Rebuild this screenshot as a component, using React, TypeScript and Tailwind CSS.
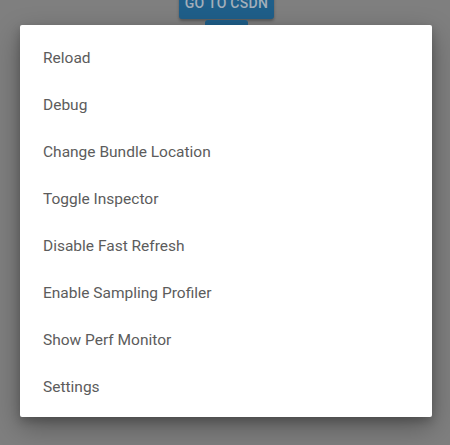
import React from "react";

const items = [
  "Reload",
  "Debug",
  "Change Bundle Location",
  "Toggle Inspector",
  "Disable Fast Refresh",
  "Enable Sampling Profiler",
  "Show Perf Monitor",
  "Settings",
];

export default function App() {
  return (
    <div
      className="relative w-[450px] h-[445px] overflow-hidden bg-[#7f7f7f]"
      style={{ fontFamily: "Roboto, 'Noto Sans', sans-serif" }}
    >
      <div className="flex flex-col items-center pl-[3px] -mt-[12px] gap-[1px]">
        <div className="h-[31px] w-[95px] rounded-[3px] bg-[#1f5f8a] shadow-[0_2px_3px_rgba(0,0,0,0.3)] flex items-center justify-center text-[14px] font-medium tracking-[0.3px] text-[#a3afba]">
          GO TO CSDN
        </div>
        <div className="h-[31px] w-[43px] rounded-[3px] bg-[#1f5f8a]" />
      </div>

      <div className="absolute left-[20px] top-[25px] w-[412px] h-[392px] bg-white rounded-[2px] shadow-[0_10px_28px_rgba(0,0,0,0.32),0_4px_10px_rgba(0,0,0,0.2)] pt-[10px] pb-[6px] flex flex-col">
        {items.map((t) => (
          <div
            key={t}
            className="h-[47px] flex items-center pl-[23px] text-[15.5px] text-[#5c5c5c]"
          >
            {t}
          </div>
        ))}
      </div>
    </div>
  );
}
